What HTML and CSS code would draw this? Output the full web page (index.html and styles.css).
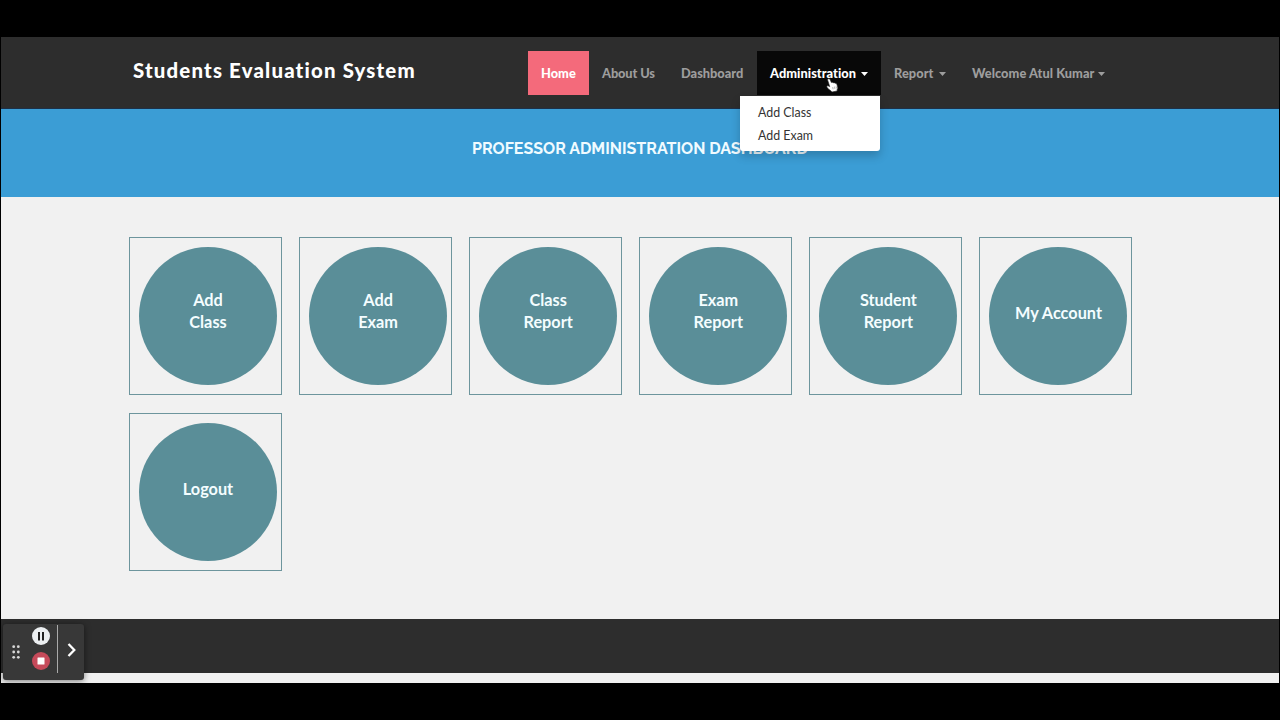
FILE: index.html
```
<!DOCTYPE html>
<html lang="en">
<head>
    <meta charset="UTF-8">
    <meta name="viewport" content="width=device-width, initial-scale=1.0">
    <title>Students Evaluation System</title>
    <link rel="stylesheet" href="styles.css">
</head>
<body>

<div class="page">
    <header class="navbar">
        <a class="brand">Students Evaluation System</a>
        <nav class="menu">
            <a class="menu-item active w-home"><span>Home</span></a>
            <a class="menu-item w-about"><span>About Us</span></a>
            <a class="menu-item w-dash"><span>Dashboard</span></a>
            <div class="menu-item open w-admin">
                <span>Administration</span><i class="caret"></i>
                <div class="dropdown">
                    <a>Add Class</a>
                    <a>Add Exam</a>
                </div>
                <svg class="pointer" width="14" height="15" viewBox="0 0 14 15">
                    <path d="M2.300.8c.8-.4 1.500 0 1.800.8l1.300 3c.7-.5 1.500-.3 1.900.3.7-.4 1.500-.2 1.800.4.8-.2 1.500.1 1.700.9l.9 2.900c.2 1 0 1.800-.6 2.600l.1 1.200-5.400 1.200-.7-1.100C3.800 12.300 2.400 11 1 9.300c-.7-1 .5-1.900 1.400-1.300l1.300.6L1.700 2.200c-.2-.7.2-1.200.6-1.400z" fill="#fff" stroke="#222" stroke-width=".6"/>
                    <path d="M6.700 9l.4 2.300M8.500 8.600l.4 2.300M10.200 8.300l.4 2.200" stroke="#888" stroke-width=".6"/>
                </svg>
            </div>
            <a class="menu-item w-report"><span>Report</span><i class="caret"></i></a>
            <a class="menu-item w-user"><span>Welcome Atul Kumar</span><i class="caret"></i></a>
        </nav>
    </header>

    <section class="title-bar">
        <h2>PROFESSOR ADMINISTRATION DASHBOARD</h2>
    </section>

    <main class="tiles">
        <a class="tile"><span class="circle">Add<br>Class</span></a>
        <a class="tile"><span class="circle">Add<br>Exam</span></a>
        <a class="tile"><span class="circle">Class<br>Report</span></a>
        <a class="tile"><span class="circle">Exam<br>Report</span></a>
        <a class="tile"><span class="circle">Student<br>Report</span></a>
        <a class="tile"><span class="circle single">My Account</span></a>
        <a class="tile"><span class="circle single">Logout</span></a>
    </main>

    <footer class="footer"></footer>

    <!-- floating recorder controls -->
    <div class="recorder">
        <svg class="grip" width="8" height="14" viewBox="0 0 8 14" fill="#d8d8d8">
            <circle cx="1.700" cy="1.700" r="1.400"/><circle cx="6.300" cy="1.700" r="1.400"/>
            <circle cx="1.700" cy="7" r="1.400"/><circle cx="6.300" cy="7" r="1.400"/>
            <circle cx="1.700" cy="12.300" r="1.400"/><circle cx="6.300" cy="12.300" r="1.400"/>
        </svg>
        <div class="controls">
            <svg width="18" height="18" viewBox="0 0 18 18">
                <circle cx="9" cy="9" r="9" fill="#eceff1"/>
                <path d="M6 5h2v8.500H6zM10 5h2v8.500h-2z" fill="#222"/>
            </svg>
            <svg width="18" height="18" viewBox="0 0 18 18">
                <circle cx="9" cy="9" r="9" fill="#c64a5a"/>
                <rect x="5.500" y="5.500" width="7" height="7" rx=".5" fill="#fff"/>
            </svg>
        </div>
        <div class="divider"></div>
        <svg class="chevron" width="10" height="14" viewBox="0 0 10 14">
            <path d="M1.500 1L7.300 7 1.500 13" fill="none" stroke="#fff" stroke-width="2.300"/>
        </svg>
    </div>
</div>

</body>
</html>
```
FILE: styles.css
```
* {
    box-sizing: border-box;
}
body {
    margin: 0;
    height: 720px;
    padding: 37px 1px;
    background-color: #000;
    font-family: Lato, sans-serif;
    overflow: hidden;
}
.page {
    position: relative;
    height: 646px;
    background-color: #f1f1f1;
}
.navbar {
    display: flex;
    justify-content: space-between;
    height: 72px;
    padding: 14px 161px 0 132px;
    background-color: #2d2d2d;
    border-bottom: 1px solid #1c3049;
}
.brand {
    padding-top: 5px;
    font-size: 20.4px;
    line-height: 28px;
    font-weight: 900;
    letter-spacing: 1.17px;
    color: #fff;
    white-space: nowrap;
}
.menu {
    display: flex;
}
.menu-item {
    position: relative;
    display: flex;
    align-items: center;
    height: 44px;
    padding: 0 13px;
    font-size: 12.8px;
    font-weight: 900;
    color: #9d9d9d;
    white-space: nowrap;
}
.w-home {
    width: 61px;
}
.w-about {
    width: 79px;
    letter-spacing: -0.1px;
}
.w-dash {
    width: 89px;
}
.w-admin {
    width: 124px;
    letter-spacing: 0.05px;
}
.w-report {
    width: 78px;
    letter-spacing: 0.05px;
}
.w-user {
    width: 159px;
    letter-spacing: 0.05px;
}
.menu-item.active {
    background-color: #f46a7b;
    color: #fff;
}
.menu-item.open {
    background-color: #080808;
    color: #fff;
    z-index: 2;
}
.caret {
    width: 7px;
    height: 4px;
    margin: 2px 0 0 auto;
    background-color: currentColor;
    clip-path: polygon(0 0, 100% 0, 50% 100%);
}
.dropdown {
    position: absolute;
    top: 45px;
    right: 1px;
    width: 140px;
    height: 55px;
    padding: 5px 18px;
    background-color: #fff;
    border-radius: 0 0 3px 3px;
    box-shadow: 0 5px 10px rgba(0, 0, 0, 0.2);
}
.dropdown a {
    display: block;
    font-size: 12.4px;
    line-height: 23px;
    font-weight: 400;
    letter-spacing: 0;
    color: #333;
}
.pointer {
    position: absolute;
    top: 27px;
    left: 69px;
}
.title-bar {
    height: 88px;
    padding-top: 28px;
    background-color: #3b9dd5;
    text-align: center;
}
.title-bar h2 {
    margin: 0;
    font-family: Raleway, Lato, sans-serif;
    font-size: 16px;
    line-height: 24px;
    font-weight: 700;
    color: #f0fbff;
}
.tiles {
    display: grid;
    grid-template-columns: repeat(6, 153px);
    grid-auto-rows: 158px;
    column-gap: 17.1px;
    row-gap: 18px;
    align-content: start;
    height: 422px;
    padding: 40px 0 0 127.5px;
}
.tile {
    padding: 9px 0 0 9.500px;
    border: 1px solid #6d959d;
}
.circle {
    display: flex;
    align-items: center;
    justify-content: center;
    width: 138px;
    height: 138px;
    padding-bottom: 11px;
    border-radius: 50%;
    background-color: #5a8e98;
    font-size: 16.3px;
    line-height: 22px;
    font-weight: 700;
    text-align: center;
    color: #f4fdff;
}
.circle.single {
    padding-bottom: 6px;
}
.footer {
    height: 54px;
    background-color: #2d2d2d;
}
.recorder {
    position: absolute;
    left: 2px;
    top: 587px;
    display: flex;
    align-items: center;
    width: 81px;
    height: 56px;
    padding: 0 7px 7px 9px;
    background-color: #383838;
    border-radius: 3px;
    box-shadow: 0 1px 6px rgba(0, 0, 0, 0.5);
}
.grip {
    margin-top: 7px;
}
.controls {
    display: flex;
    flex-direction: column;
    gap: 7px;
    margin: 0 0 0 12px;
}
.divider {
    width: 1px;
    height: 48px;
    margin: 0 9px 0 7px;
    background-color: #aaa;
}
.chevron {
    margin-top: 2px;
}
```
